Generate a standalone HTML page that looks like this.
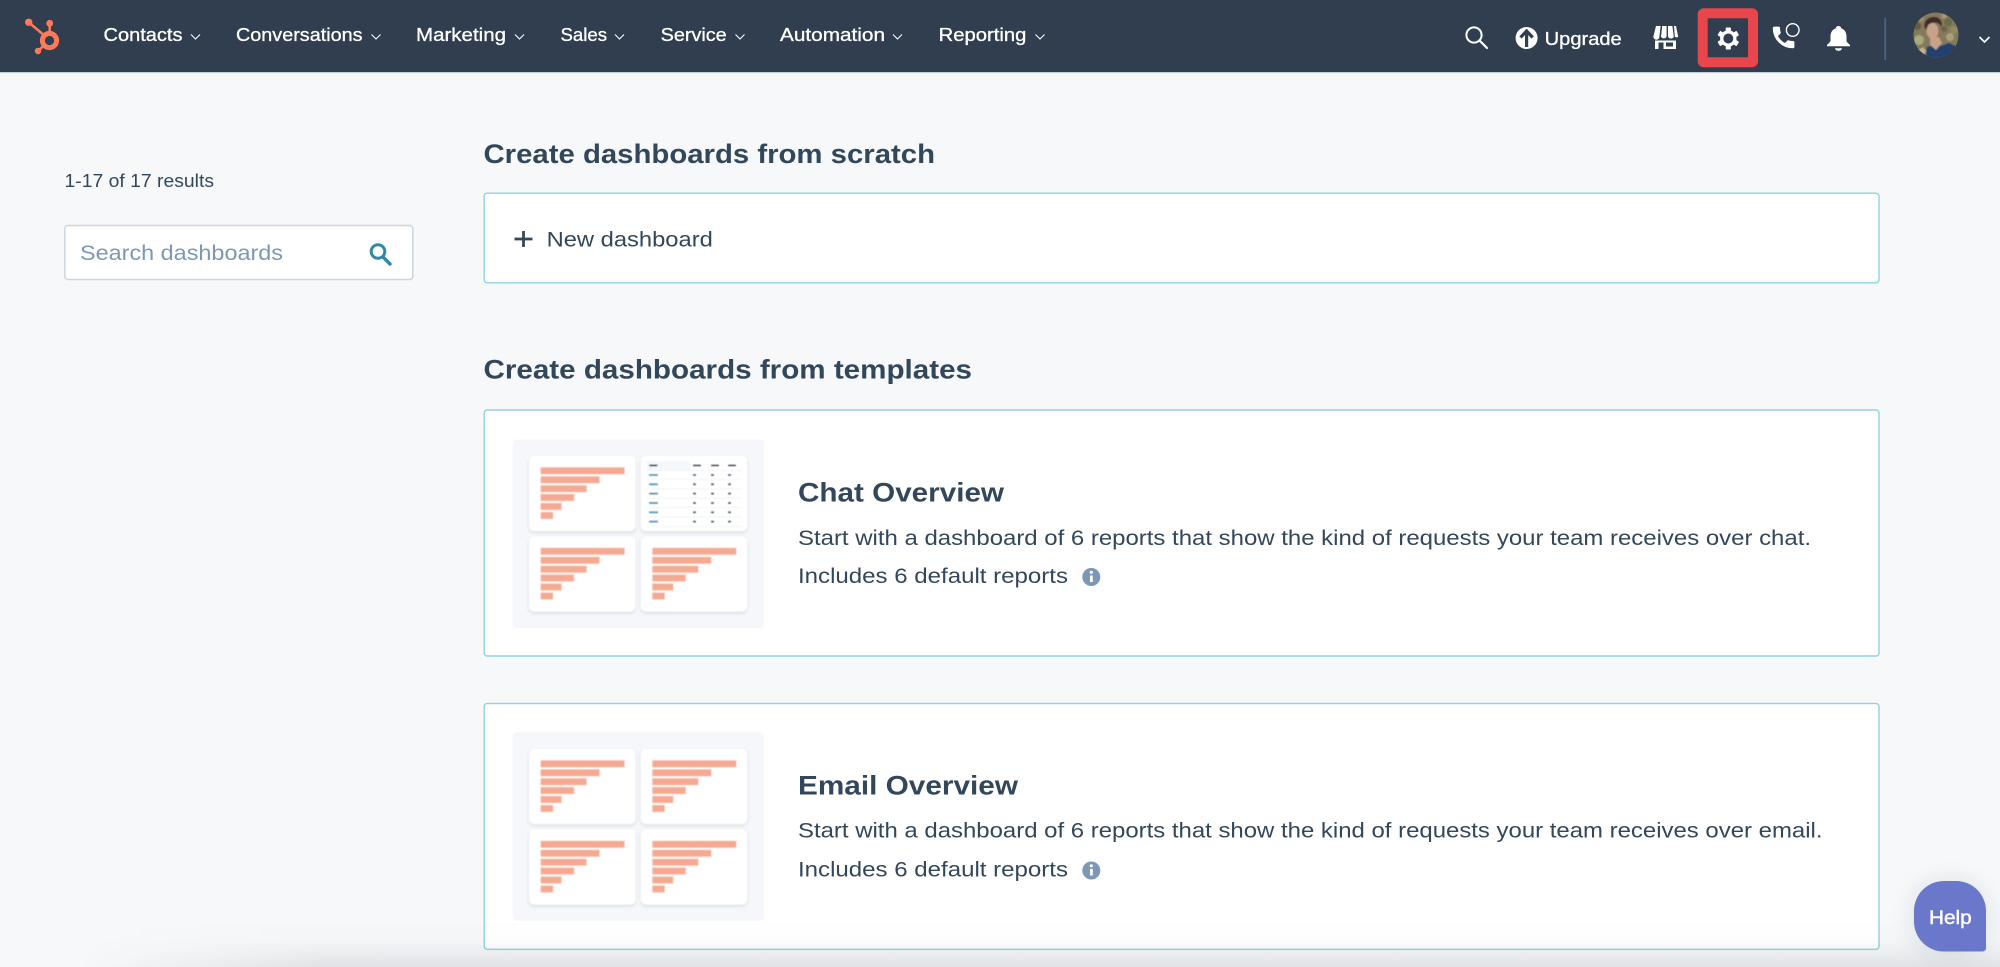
<!DOCTYPE html>
<html lang="en"><head><meta charset="utf-8"><title>Dashboards</title>
<style>
html,body{margin:0;padding:0;background:#f6f8fa;width:2000px;height:967px;overflow:hidden}
svg{display:block;font-family:"Liberation Sans",sans-serif}
.n{fill:#fff;font-size:18px;stroke:#fff;stroke-width:.3px}
.b{fill:#33475b;font-size:21px}
.h{fill:#33475b;font-size:27px;font-weight:700}
.c{fill:none;stroke:#fff;stroke-width:1.1}
.k{fill:#fff;stroke:#93d2df;stroke-width:1.4}
</style></head><body>
<svg xmlns="http://www.w3.org/2000/svg" width="2000" height="967" viewBox="0 0 2000 967">
<defs>
<filter id="sh" x="-20%" y="-20%" width="140%" height="140%"><feDropShadow dx="0" dy="1.5" stdDeviation="1.5" flood-color="#33475b" flood-opacity=".18"/></filter>
<filter id="bl" x="-5%" y="-5%" width="110%" height="110%"><feGaussianBlur stdDeviation=".45"/></filter>
<filter id="ab" x="-20%" y="-20%" width="140%" height="140%"><feGaussianBlur stdDeviation=".6"/></filter>
<filter id="hs" x="-40%" y="-40%" width="180%" height="180%"><feGaussianBlur stdDeviation="12"/></filter>
<linearGradient id="vg" x1="0" y1="0" x2="0" y2="1">
<stop offset="0" stop-color="#33383c" stop-opacity="0"/>
<stop offset=".4" stop-color="#33383c" stop-opacity=".012"/>
<stop offset=".7" stop-color="#33383c" stop-opacity=".05"/>
<stop offset="1" stop-color="#33383c" stop-opacity=".105"/>
</linearGradient>
<linearGradient id="hg" x1="0" y1="0" x2="1" y2="0">
<stop offset="0" stop-color="#fff" stop-opacity="0"/>
<stop offset=".04" stop-color="#fff" stop-opacity="0"/>
<stop offset=".16" stop-color="#fff" stop-opacity="1"/>
<stop offset="1" stop-color="#fff" stop-opacity="1"/>
</linearGradient>
<mask id="hm" maskUnits="userSpaceOnUse" x="0" y="920" width="2000" height="47"><rect x="0" y="920" width="2000" height="47" fill="url(#hg)"/></mask>
<clipPath id="av"><circle cx="1936" cy="35" r="22.5"/></clipPath>
<g id="chart">
<rect width="106" height="75" rx="5" fill="#fff" filter="url(#sh)"/>
<g fill="#f5a992" stroke="#fcdcd1" stroke-width=".6">
<rect x="11.3" y="11.3" width="84" height="7"/><rect x="11.3" y="20.3" width="59" height="7"/><rect x="11.3" y="29.2" width="46" height="7"/><rect x="11.3" y="38" width="33.5" height="7"/><rect x="11.3" y="47" width="21" height="7"/><rect x="11.3" y="56" width="12.5" height="7"/>
</g></g>
</defs>

<rect width="2000" height="967" fill="#f6f8fa"/>

<!-- top nav -->
<rect width="2000" height="72" fill="#303e50"/>
<rect y="72" width="2000" height="1.2" fill="#c5d2de"/>

<!-- logo -->
<g fill="#ff7a59">
<circle cx="28.7" cy="22.3" r="3.7"/><circle cx="49.7" cy="23.3" r="3.4"/><circle cx="38" cy="51" r="3.2"/>
<path d="M28.7 22.3L45 36M49.7 23.3V33M38 51L44 45.5" stroke="#ff7a59" stroke-width="2.5" fill="none"/>
<circle cx="49.5" cy="40.5" r="7.1" fill="none" stroke="#ff7a59" stroke-width="5"/>
</g>

<!-- nav labels -->
<text class="n" x="103.5" y="41" textLength="79" lengthAdjust="spacingAndGlyphs">Contacts</text>
<path class="c" d="M191 34.5l4.5 4.5 4.5-4.5"/>
<text class="n" x="236" y="41" textLength="126.5" lengthAdjust="spacingAndGlyphs">Conversations</text>
<path class="c" d="M371.5 34.5l4.5 4.5 4.5-4.5"/>
<text class="n" x="416" y="41" textLength="90" lengthAdjust="spacingAndGlyphs">Marketing</text>
<path class="c" d="M515 34.5l4.5 4.5 4.5-4.5"/>
<text class="n" x="560.5" y="41" textLength="46.5" lengthAdjust="spacingAndGlyphs">Sales</text>
<path class="c" d="M615 34.5l4.5 4.5 4.5-4.5"/>
<text class="n" x="660.7" y="41" textLength="66" lengthAdjust="spacingAndGlyphs">Service</text>
<path class="c" d="M735.5 34.5l4.5 4.5 4.5-4.5"/>
<text class="n" x="780" y="41" textLength="105" lengthAdjust="spacingAndGlyphs">Automation</text>
<path class="c" d="M893 34.5l4.5 4.5 4.5-4.5"/>
<text class="n" x="938.7" y="41" textLength="87.7" lengthAdjust="spacingAndGlyphs">Reporting</text>
<path class="c" d="M1035.5 34.5l4.5 4.5 4.5-4.5"/>

<!-- search -->
<circle cx="1474" cy="35" r="7.6" fill="none" stroke="#fff" stroke-width="2"/>
<path d="M1479.5 40.5L1487 48" fill="none" stroke="#fff" stroke-width="2.2" stroke-linecap="round"/>

<!-- upgrade -->
<circle cx="1526.6" cy="38" r="11" fill="#fff"/>
<path d="M1526.6 47V33M1520.5 37.5l6.1-6.5 6.1 6.5" fill="none" stroke="#303e50" stroke-width="3.2"/>
<text class="n" x="1544.7" y="45" textLength="77" lengthAdjust="spacingAndGlyphs">Upgrade</text>

<!-- store -->
<g fill="#fff">
<path d="M1656 26h4.6l-1.2 10.5a2.9 2.9 0 0 1-6.1 0.3zM1662.2 26h4.4v10.5a3.2 3.2 0 0 1-5.6 0.4zM1668 26h4.4l1.4 10.9a3.2 3.2 0 0 1-5.8-.4zM1674 26h2l2.2 10.8a2.9 2.9 0 0 1-3.4 0z"/>
<path fill-rule="evenodd" d="M1655 40.5h21V49h-21zM1658.5 42.5v6.5h5v-6.5zM1666 42.5v4h7v-4z"/>
</g>

<!-- red highlight -->
<rect x="1702.7" y="13.3" width="50.3" height="49" rx="1" fill="none" stroke="#e8464c" stroke-width="10"/>

<!-- gear -->
<g transform="translate(1728.3 38.5)" fill="#fff">
<circle r="6.6" fill="none" stroke="#fff" stroke-width="3.2"/>
<rect x="-2.6" y="-11" width="5.2" height="4.5" rx=".8"/>
<rect x="-2.6" y="-11" width="5.2" height="4.5" rx=".8" transform="rotate(60)"/>
<rect x="-2.6" y="-11" width="5.2" height="4.5" rx=".8" transform="rotate(120)"/>
<rect x="-2.6" y="-11" width="5.2" height="4.5" rx=".8" transform="rotate(180)"/>
<rect x="-2.6" y="-11" width="5.2" height="4.5" rx=".8" transform="rotate(240)"/>
<rect x="-2.6" y="-11" width="5.2" height="4.5" rx=".8" transform="rotate(300)"/>
</g>

<!-- phone -->
<g transform="translate(1769.8 23.6) scale(1.15)"><path fill="#fff" stroke="#fff" stroke-width=".8" stroke-linejoin="round" d="M6.62 10.79c1.44 2.83 3.76 5.14 6.59 6.59l2.2-2.2c.27-.27.67-.36 1.02-.24 1.12.37 2.33.57 3.57.57.55 0 1 .45 1 1V20c0 .55-.45 1-1 1-9.39 0-17-7.61-17-17 0-.55.45-1 1-1h3.5c.55 0 1 .45 1 1 0 1.25.2 2.45.57 3.57.11.35.03.74-.25 1.02l-2.2 2.2z"/></g>
<circle cx="1792.7" cy="30" r="6.3" fill="#303e50" stroke="#fff" stroke-width="1.4"/>

<!-- bell -->
<path fill="#fff" d="M1838.5 26c1.6 0 2.6 1 2.7 2.4 3.6 1.2 5.3 4.2 5.3 8v4.2c0 1.2 1.3 2.3 3.5 4.4v1.2h-23v-1.2c2.2-2.1 3.5-3.2 3.5-4.4v-4.2c0-3.8 1.7-6.8 5.3-8 .1-1.4 1.1-2.4 2.7-2.4z"/>
<path fill="#fff" d="M1835 48.3h7c-.3 1.6-1.7 2.6-3.5 2.6s-3.2-1-3.5-2.6z"/>

<!-- divider -->
<rect x="1884.3" y="18" width="1.8" height="42" fill="#4a6482"/>

<!-- avatar -->
<g clip-path="url(#av)">
<rect x="1913" y="12.5" width="46" height="45" fill="#85795c"/>
<g filter="url(#ab)">
<circle cx="1917" cy="26" r="4" fill="#6a5a44"/><circle cx="1921" cy="19" r="3" fill="#a08a70"/><circle cx="1948" cy="22" r="4" fill="#6a6c4a"/><circle cx="1954" cy="30" r="4" fill="#8f8a62"/><circle cx="1950" cy="37" r="4" fill="#a9a17c"/><circle cx="1919" cy="40" r="5" fill="#a7ab80"/><circle cx="1944" cy="16" r="3" fill="#a39474"/><circle cx="1944" cy="29" r="3" fill="#6f6248"/>
<path d="M1926 57.5l1-10.500 7-2 7 1 8-3 8 4 2 10.500z" fill="#234070"/>
<path d="M1930 37h9l3 6-6 7-6-5z" fill="#c7a18a"/>
<ellipse cx="1932.5" cy="31" rx="6" ry="8" fill="#c8a18a"/>
<path d="M1924.5 27c-.5-7 4.5-10 9.5-10 5.5 0 8.5 4 7.5 10-1.500-3-4-5-7.500-4.500-3.500.5-7.500 1.500-7 7.500z" fill="#3f2f28"/>
<path d="M1918 50l5-3 3 4-3 6z" fill="#c4b294"/>
</g>
</g>
<path d="M1979.5 37l5 5 5-5" fill="none" stroke="#fff" stroke-width="1.6"/>

<!-- left column -->
<text class="b" x="64.5" y="187" style="font-size:18px" textLength="149.5" lengthAdjust="spacingAndGlyphs">1-17 of 17 results</text>
<rect x="64.8" y="225.5" width="348" height="54" rx="3" fill="#fff" stroke="#cbd6e2" stroke-width="1.5"/>
<text x="80" y="260" fill="#7c98b6" font-size="21" textLength="203" lengthAdjust="spacingAndGlyphs">Search dashboards</text>
<circle cx="378" cy="251.5" r="6.8" fill="none" stroke="#2f8aa8" stroke-width="3"/>
<path d="M383 257l7 7" stroke="#2f8aa8" stroke-width="3.4" stroke-linecap="round"/>

<!-- scratch -->
<text class="h" x="483.5" y="163" textLength="451.5" lengthAdjust="spacingAndGlyphs">Create dashboards from scratch</text>
<rect class="k" x="484.2" y="193.2" width="1394.8" height="89.6" rx="3"/>
<path d="M523.5 231v16M514.5 239h18" stroke="#33475b" stroke-width="2.8"/>
<text class="b" x="546.6" y="246.5" textLength="166.2" lengthAdjust="spacingAndGlyphs">New dashboard</text>

<!-- templates -->
<text class="h" x="483.5" y="378.5" textLength="488.5" lengthAdjust="spacingAndGlyphs">Create dashboards from templates</text>

<!-- card 1 -->
<rect class="k" x="484.2" y="410" width="1394.8" height="246" rx="3"/>
<rect x="512.7" y="439.5" width="251.5" height="188.5" rx="4" fill="#f5f7fa"/>
<g filter="url(#bl)">
<use href="#chart" x="529.3" y="456"/>
<use href="#chart" x="529.3" y="536.5"/>
<use href="#chart" x="641" y="536.5"/>
<rect x="641" y="456" width="106" height="75" rx="5" fill="#fff" filter="url(#sh)"/>
<rect x="646" y="461" width="44" height="9" fill="#f5f8fa"/>
<g stroke="#eef1f5" stroke-width=".8"><path d="M646 470.3h96M646 479.5h96M646 488.8h96M646 498.2h96M646 507.5h96M646 516.8h96M646 526.5h96"/></g>
<g fill="#33475b"><rect x="649.3" y="464.5" width="8" height="1.8"/><rect x="693" y="464.5" width="8" height="1.8"/><rect x="711" y="464.5" width="8" height="1.8"/><rect x="728" y="464.5" width="8" height="1.8"/></g>
<g fill="#4a9db5">
<rect x="649" y="474" width="9" height="2"/><rect x="649" y="483.3" width="9" height="2"/><rect x="649" y="492.6" width="9" height="2"/><rect x="649" y="502" width="9" height="2"/><rect x="649" y="511.3" width="9" height="2"/><rect x="649" y="520.6" width="9" height="2"/>
</g>
<g fill="#4a5a6c">
<rect x="693" y="474" width="3" height="2"/><rect x="711" y="474" width="3" height="2"/><rect x="728" y="474" width="3" height="2"/>
<rect x="693" y="483.3" width="3" height="2"/><rect x="711" y="483.3" width="3" height="2"/><rect x="728" y="483.3" width="3" height="2"/>
<rect x="693" y="492.6" width="3" height="2"/><rect x="711" y="492.6" width="3" height="2"/><rect x="728" y="492.6" width="3" height="2"/>
<rect x="693" y="502" width="3" height="2"/><rect x="711" y="502" width="3" height="2"/><rect x="728" y="502" width="3" height="2"/>
<rect x="693" y="511.3" width="3" height="2"/><rect x="711" y="511.3" width="3" height="2"/><rect x="728" y="511.3" width="3" height="2"/>
<rect x="693" y="520.6" width="3" height="2"/><rect x="711" y="520.6" width="3" height="2"/><rect x="728" y="520.6" width="3" height="2"/>
</g>
</g>
<text class="h" x="798" y="501.5" textLength="206" lengthAdjust="spacingAndGlyphs">Chat Overview</text>
<text class="b" x="798" y="545" textLength="1013" lengthAdjust="spacingAndGlyphs">Start with a dashboard of 6 reports that show the kind of requests your team receives over chat.</text>
<text class="b" x="798" y="583" textLength="270" lengthAdjust="spacingAndGlyphs">Includes 6 default reports</text>
<circle cx="1091.3" cy="577" r="9" fill="#7c98b6"/>
<rect x="1090" y="575.5" width="2.8" height="6.5" fill="#fff"/><circle cx="1091.3" cy="572.3" r="1.6" fill="#fff"/>

<!-- card 2 -->
<rect class="k" x="484.2" y="703.5" width="1394.8" height="245.8" rx="3"/>
<rect x="512.7" y="732.3" width="251.5" height="188.5" rx="4" fill="#f5f7fa"/>
<g filter="url(#bl)">
<use href="#chart" x="529.3" y="749"/>
<use href="#chart" x="641" y="749"/>
<use href="#chart" x="529.3" y="829.5"/>
<use href="#chart" x="641" y="829.5"/>
</g>
<text class="h" x="798" y="794.3" textLength="220" lengthAdjust="spacingAndGlyphs">Email Overview</text>
<text class="b" x="798" y="837.7" textLength="1024.5" lengthAdjust="spacingAndGlyphs">Start with a dashboard of 6 reports that show the kind of requests your team receives over email.</text>
<text class="b" x="798" y="876.5" textLength="270" lengthAdjust="spacingAndGlyphs">Includes 6 default reports</text>
<circle cx="1091.3" cy="870.5" r="9" fill="#7c98b6"/>
<rect x="1090" y="869" width="2.8" height="6.5" fill="#fff"/><circle cx="1091.3" cy="865.8" r="1.6" fill="#fff"/>

<!-- bottom shadow -->
<rect x="0" y="920" width="2000" height="47" fill="url(#vg)" mask="url(#hm)"/>

<!-- help -->
<rect x="1916" y="885" width="68" height="66" rx="30" fill="#33475b" fill-opacity=".2" filter="url(#hs)"/>
<path d="M1944 881h12a30 30 0 0 1 30 30v37a3.5 3.5 0 0 1-3.5 3.5h-38.5a30 30 0 0 1-30-30v-10.5a30 30 0 0 1 30-30z" fill="#6a78cb"/>
<text x="1929" y="924" fill="#fff" font-size="19" stroke="#fff" stroke-width=".45" textLength="42.7" lengthAdjust="spacingAndGlyphs">Help</text>
</svg>
</body></html>
